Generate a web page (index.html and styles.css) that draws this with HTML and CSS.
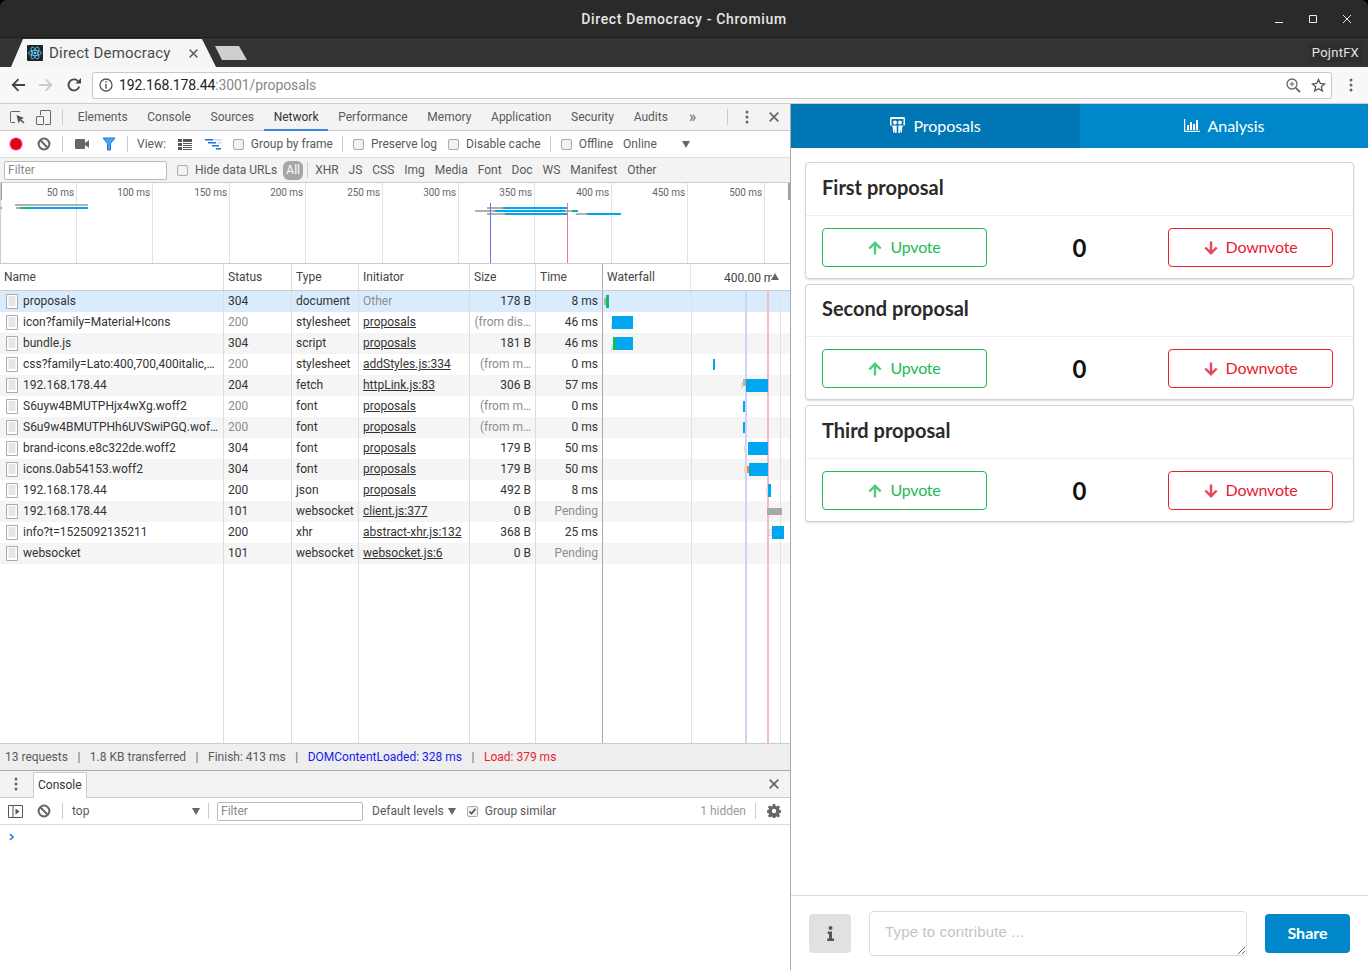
FILE: index.html
```html
<!DOCTYPE html>
<html lang="en">
<head>
<meta charset="utf-8">
<title>Direct Democracy - Chromium</title>
<link rel="stylesheet" href="styles.css">
</head>
<body>
<svg class="defs" width="0" height="0">
  <symbol id="doc" viewBox="0 0 12 15"><path d="M.5.5h11v14H.5z" fill="#fff" stroke="#aaa"/><path d="M2.500 3h7M2.500 5h7M2.500 7h7M2.500 9h7M2.500 11h7" stroke="#ccc"/></symbol>
  <symbol id="block" viewBox="0 0 14 14"><circle cx="7" cy="7" r="5.400" fill="none" stroke="#666" stroke-width="2"/><path d="M3.300 3.300l7.400 7.400" stroke="#666" stroke-width="2"/></symbol>
  <symbol id="close" viewBox="0 0 10 10"><path d="M.7.7l8.600 8.600M9.300.7L.7 9.300" stroke="#666" stroke-width="1.700"/></symbol>
  <symbol id="kebab" viewBox="0 0 4 14"><circle cx="2" cy="2" r="1.500" fill="#666"/><circle cx="2" cy="7" r="1.500" fill="#666"/><circle cx="2" cy="12" r="1.500" fill="#666"/></symbol>
  <symbol id="up" viewBox="0 0 14 14"><path d="M7 13.500V2M1.300 7.500L7 1.800l5.700 5.700" fill="none" stroke="currentColor" stroke-width="2.400"/></symbol>
  <symbol id="down" viewBox="0 0 14 14"><path d="M7 .5V12M1.300 6.500L7 12.200l5.700-5.700" fill="none" stroke="currentColor" stroke-width="2.400"/></symbol>
</svg>
<div class="window">
  <header class="titlebar">
    <span class="title">Direct Democracy - Chromium</span>
    <div class="winctl">
      <svg width="10" height="10" viewBox="0 0 10 10"><path d="M1 8.500h8" stroke="#eee" stroke-width="1"/></svg>
      <svg width="10" height="10" viewBox="0 0 10 10"><path d="M1.500 1.500h7v7h-7z" fill="none" stroke="#eee"/></svg>
      <svg width="10" height="10" viewBox="0 0 10 10"><path d="M1 1l8 8M9 1L1 9" stroke="#eee"/></svg>
    </div>
  </header>
  <div class="tabstrip">
    <div class="tab">
      <svg class="favicon" width="16" height="16" viewBox="0 0 16 16"><rect width="16" height="16" rx="1" fill="#20232a"/><g fill="none" stroke="#61dafb" stroke-width=".8"><ellipse cx="8" cy="8" rx="6.500" ry="2.600"/><ellipse cx="8" cy="8" rx="6.500" ry="2.600" transform="rotate(60 8 8)"/><ellipse cx="8" cy="8" rx="6.500" ry="2.600" transform="rotate(120 8 8)"/></g><circle cx="8" cy="8" r="1.300" fill="#61dafb"/></svg>
      <span class="tabtitle">Direct Democracy</span>
      <svg class="tabclose" width="9" height="9"><use href="#close"/></svg>
    </div>
    <div class="newtab"></div>
    <span class="profile">PojntFX</span>
  </div>
  <div class="navbar">
    <svg class="nav1" width="14" height="14" viewBox="0 0 14 14"><path d="M14 7H2M7.500 1.200L1.700 7l5.800 5.800" fill="none" stroke="#444" stroke-width="1.800"/></svg>
    <svg class="nav2" width="14" height="14" viewBox="0 0 14 14"><path d="M0 7h12M6.500 1.200L12.300 7l-5.800 5.800" fill="none" stroke="#ccc" stroke-width="1.800"/></svg>
    <svg class="nav3" width="14" height="14" viewBox="0 0 14 14"><path d="M12.300 8.500A5.500 5.500 0 1 1 11 3.100" fill="none" stroke="#444" stroke-width="1.800"/><path d="M8.500 5.500H14V0z" fill="#444"/></svg>
    <div class="omnibox">
      <svg width="14" height="14" viewBox="0 0 14 14"><circle cx="7" cy="7" r="6" fill="none" stroke="#555" stroke-width="1.300"/><path d="M6.300 3.300h1.400v1.400H6.300zM6.300 6h1.400v4.700H6.300z" fill="#555"/></svg>
      <span class="url"><b>192.168.178.44</b>:3001/proposals</span>
      <svg class="zoomic" width="15" height="15" viewBox="0 0 15 15"><circle cx="6" cy="6" r="5" fill="none" stroke="#666" stroke-width="1.300"/><path d="M9.800 9.800L14 14" stroke="#666" stroke-width="1.800"/><path d="M3.500 6h5M6 3.500v5" stroke="#666"/></svg>
      <svg class="star" width="15" height="15" viewBox="0 0 15 15"><path d="M7.500 1.500l1.800 4 4.300.4-3.300 2.900 1 4.200-3.800-2.200-3.800 2.200 1-4.200L1.400 5.900l4.300-.4z" fill="none" stroke="#555" stroke-width="1.300"/></svg>
    </div>
    <svg class="navkebab" width="4" height="14"><use href="#kebab"/></svg>
  </div>

  <main class="content">
    <section class="devtools">
      <nav class="dt-tabs">
        <svg class="ic-inspect" width="15" height="13" viewBox="0 0 15 13"><path d="M10 .5H1.500a1 1 0 0 0-1 1v9a1 1 0 0 0 1 1H5" fill="none" stroke="#666"/><path d="M6.500 4l2 8.500 1.500-3 3.500 3 1-1-3.300-3.200 2.800-1.300z" fill="#555"/></svg>
        <svg class="ic-device" width="15" height="15" viewBox="0 0 15 15"><path d="M4.500 5V1a.5.500 0 0 1 .5-.5h9a.5.500 0 0 1 .5.500v13a.5.500 0 0 1-.5.500H9" fill="none" stroke="#666"/><rect x=".5" y="6.500" width="7" height="8" rx=".5" fill="none" stroke="#666"/></svg>
        <i class="sep sep-tabs"></i>
        <a>Elements</a><a>Console</a><a>Sources</a><a class="active">Network</a><a>Performance</a><a>Memory</a><a>Application</a><a>Security</a><a>Audits</a>
        <span class="more">»</span>
        <i class="sep sep-end"></i>
        <svg class="dt-kebab" width="4" height="14"><use href="#kebab"/></svg>
        <svg class="dt-close" width="10" height="10"><use href="#close"/></svg>
      </nav>
      <div class="dt-toolbar">
        <span class="record"></span>
        <svg class="ic-block" width="14" height="14"><use href="#block"/></svg>
        <i class="sep sep-a"></i>
        <svg class="ic-cam" width="14" height="10" viewBox="0 0 14 10"><rect width="10" height="10" rx="1" fill="#666"/><path d="M10 4l4-3v8l-4-3z" fill="#666"/></svg>
        <svg class="ic-filter" width="14" height="14" viewBox="0 0 14 14"><path d="M1 1h12L8.500 6.500V13h-3V6.500z" fill="#4aa5ee" stroke="#1a73d9"/></svg>
        <i class="sep sep-b"></i>
        <span class="view">View:</span>
        <svg class="ic-list" width="14" height="11" viewBox="0 0 14 11"><path d="M0 0h4v3H0zM5 0h9v3H5zM0 4h4v3H0zM5 4h9v1H5zM5 6h9v1H5zM0 8h4v3H0zM5 8h9v1H5zM5 10h9v1H5z" fill="#555"/></svg>
        <svg class="ic-wf" width="17" height="11" viewBox="0 0 17 11"><path d="M0 0h8v1.500H0z" fill="#1a73d9"/><path d="M8 0h9v1.500H8zM12 3h5v1.500h-5z" fill="#cde"/><path d="M3 3h8v1.500H3zM7 6h7v1.500H7zM11 9h5v1.500h-5z" fill="#1a73d9"/></svg>
        <label class="cb cb-group"><i class="box"></i>Group by frame</label>
        <i class="sep sep-c"></i>
        <label class="cb cb-log"><i class="box"></i>Preserve log</label>
        <label class="cb cb-cache"><i class="box"></i>Disable cache</label>
        <i class="sep sep-d"></i>
        <label class="cb cb-off"><i class="box"></i>Offline</label>
        <span class="online">Online</span>
        <i class="tri tri-online"></i>
      </div>
      <div class="dt-filter">
        <div class="input filter-main">Filter</div>
        <label class="cb cb-hide"><i class="box"></i>Hide data URLs</label>
        <span class="pill">All</span>
        <i class="sep sep-f"></i>
        <span class="ftype">XHR</span><span class="ftype">JS</span><span class="ftype">CSS</span><span class="ftype">Img</span><span class="ftype">Media</span><span class="ftype">Font</span><span class="ftype">Doc</span><span class="ftype">WS</span><span class="ftype">Manifest</span><span class="ftype">Other</span>
      </div>
      <div class="overview">
        <div class="tick" style="left:76px"><span>50 ms</span></div>
        <div class="tick" style="left:152px"><span>100 ms</span></div>
        <div class="tick" style="left:229px"><span>150 ms</span></div>
        <div class="tick" style="left:305px"><span>200 ms</span></div>
        <div class="tick" style="left:382px"><span>250 ms</span></div>
        <div class="tick" style="left:458px"><span>300 ms</span></div>
        <div class="tick" style="left:534px"><span>350 ms</span></div>
        <div class="tick" style="left:611px"><span>400 ms</span></div>
        <div class="tick" style="left:687px"><span>450 ms</span></div>
        <div class="tick" style="left:764px"><span>500 ms</span></div>
        <i class="handle" style="left:0"></i><i class="handle" style="left:788px"></i>
        <i class="ob blue" style="left:0;top:24px;width:2px"></i>
        <i class="ob grey" style="left:15px;top:21px;width:73px"></i>
        <i class="ob grey" style="left:16px;top:24px;width:4px"></i>
        <i class="ob green" style="left:20px;top:24px;width:9px"></i>
        <i class="ob blue" style="left:29px;top:24px;width:59px"></i>
        <i class="ob grey" style="left:487px;top:24px;width:16px"></i>
        <i class="ob blue" style="left:503px;top:24px;width:64px"></i>
        <i class="ob grey" style="left:475px;top:27px;width:20px"></i>
        <i class="ob blue" style="left:495px;top:27px;width:70px"></i>
        <i class="ob grey" style="left:565px;top:27px;width:7px"></i>
        <i class="ob green" style="left:572px;top:27px;width:3px"></i>
        <i class="ob blue" style="left:575px;top:27px;width:3px"></i>
        <i class="ob grey" style="left:487px;top:30px;width:18px"></i>
        <i class="ob blue" style="left:505px;top:30px;width:62px"></i>
        <i class="ob grey" style="left:576px;top:30px;width:11px"></i>
        <i class="ob blue" style="left:587px;top:30px;width:34px"></i>
        <i class="omark dcl"></i><i class="omark load"></i>
      </div>
      <div class="nt-head nt-grid">
        <div>Name</div><div>Status</div><div>Type</div><div>Initiator</div><div>Size</div><div>Time</div>
        <div class="wf-head"><span>Waterfall</span><span class="wf-time">400.00 ms</span><i class="tri-up"></i></div>
      </div>
      <div class="nt-body">
        <div class="nt-row nt-grid sel"><div class="name"><svg class="doc"><use href="#doc"/></svg><span>proposals</span></div><div>304</div><div>document</div><div class="dim">Other</div><div class="r">178 B</div><div class="r">8 ms</div><div></div></div>
        <div class="nt-row nt-grid"><div class="name"><svg class="doc"><use href="#doc"/></svg><span>icon?family=Material+Icons</span></div><div class="dim">200</div><div>stylesheet</div><div class="lnk">proposals</div><div class="r dim">(from dis…</div><div class="r">46 ms</div><div></div></div>
        <div class="nt-row nt-grid"><div class="name"><svg class="doc"><use href="#doc"/></svg><span>bundle.js</span></div><div>304</div><div>script</div><div class="lnk">proposals</div><div class="r">181 B</div><div class="r">46 ms</div><div></div></div>
        <div class="nt-row nt-grid"><div class="name"><svg class="doc"><use href="#doc"/></svg><span>css?family=Lato:400,700,400italic,…</span></div><div class="dim">200</div><div>stylesheet</div><div class="lnk">addStyles.js:334</div><div class="r dim">(from m…</div><div class="r">0 ms</div><div></div></div>
        <div class="nt-row nt-grid"><div class="name"><svg class="doc"><use href="#doc"/></svg><span>192.168.178.44</span></div><div>204</div><div>fetch</div><div class="lnk">httpLink.js:83</div><div class="r">306 B</div><div class="r">57 ms</div><div></div></div>
        <div class="nt-row nt-grid"><div class="name"><svg class="doc"><use href="#doc"/></svg><span>S6uyw4BMUTPHjx4wXg.woff2</span></div><div class="dim">200</div><div>font</div><div class="lnk">proposals</div><div class="r dim">(from m…</div><div class="r">0 ms</div><div></div></div>
        <div class="nt-row nt-grid"><div class="name"><svg class="doc"><use href="#doc"/></svg><span>S6u9w4BMUTPHh6UVSwiPGQ.wof…</span></div><div class="dim">200</div><div>font</div><div class="lnk">proposals</div><div class="r dim">(from m…</div><div class="r">0 ms</div><div></div></div>
        <div class="nt-row nt-grid"><div class="name"><svg class="doc"><use href="#doc"/></svg><span>brand-icons.e8c322de.woff2</span></div><div>304</div><div>font</div><div class="lnk">proposals</div><div class="r">179 B</div><div class="r">50 ms</div><div></div></div>
        <div class="nt-row nt-grid"><div class="name"><svg class="doc"><use href="#doc"/></svg><span>icons.0ab54153.woff2</span></div><div>304</div><div>font</div><div class="lnk">proposals</div><div class="r">179 B</div><div class="r">50 ms</div><div></div></div>
        <div class="nt-row nt-grid"><div class="name"><svg class="doc"><use href="#doc"/></svg><span>192.168.178.44</span></div><div>200</div><div>json</div><div class="lnk">proposals</div><div class="r">492 B</div><div class="r">8 ms</div><div></div></div>
        <div class="nt-row nt-grid"><div class="name"><svg class="doc"><use href="#doc"/></svg><span>192.168.178.44</span></div><div>101</div><div>websocket</div><div class="lnk">client.js:377</div><div class="r">0 B</div><div class="r dim">Pending</div><div></div></div>
        <div class="nt-row nt-grid"><div class="name"><svg class="doc"><use href="#doc"/></svg><span>info?t=1525092135211</span></div><div>200</div><div>xhr</div><div class="lnk">abstract-xhr.js:132</div><div class="r">368 B</div><div class="r">25 ms</div><div></div></div>
        <div class="nt-row nt-grid"><div class="name"><svg class="doc"><use href="#doc"/></svg><span>websocket</span></div><div>101</div><div>websocket</div><div class="lnk">websocket.js:6</div><div class="r">0 B</div><div class="r dim">Pending</div><div></div></div>
        <div class="nt-fill nt-grid"><div></div><div></div><div></div><div></div><div></div><div></div><div></div></div>
        <div class="wf">
          <i class="wl" style="left:88px"></i>
          <i class="wl mark-b" style="left:142px"></i>
          <i class="wl mark-r" style="left:164px"></i>
          <i class="wl" style="left:177px"></i>
          <i class="b grey" style="left:1px;top:7px;width:2px"></i><i class="b green" style="left:3px;top:4px;width:3px"></i>
          <i class="b pale" style="left:8px;top:32px;width:1px"></i><i class="b blue" style="left:9px;top:25px;width:21px"></i>
          <i class="b pale" style="left:8px;top:53px;width:2px"></i><i class="b green" style="left:10px;top:46px;width:3px"></i><i class="b blue" style="left:13px;top:46px;width:17px"></i>
          <i class="b blue short" style="left:110px;top:68px;width:2px"></i>
          <i class="b pale" style="left:138px;top:91px;width:2px"></i><i class="b grey" style="left:140px;top:88px;width:3px"></i><i class="b blue" style="left:143px;top:88px;width:22px"></i>
          <i class="b blue short" style="left:140px;top:110px;width:2px"></i>
          <i class="b blue short" style="left:140px;top:131px;width:2px"></i>
          <i class="b pale" style="left:141px;top:154px;width:3px"></i><i class="b blue" style="left:145px;top:151px;width:20px"></i>
          <i class="b pale" style="left:141px;top:175px;width:3px"></i><i class="b orange" style="left:144px;top:175px;width:2px"></i><i class="b blue" style="left:146px;top:172px;width:19px"></i>
          <i class="b pale" style="left:163px;top:196px;width:2px"></i><i class="b blue" style="left:165px;top:193px;width:3px"></i>
          <i class="b socket" style="left:164px;top:217px;width:15px"></i>
          <i class="b outline" style="left:166px;top:238px;width:3px"></i><i class="b blue" style="left:169px;top:235px;width:12px"></i>
        </div>
      </div>
      <footer class="nt-status">
        <span>13 requests</span><i>|</i><span>1.8 KB transferred</span><i>|</i><span>Finish: 413 ms</span><i>|</i><span class="s-blue">DOMContentLoaded: 328 ms</span><i>|</i><span class="s-red">Load: 379 ms</span>
      </footer>
      <div class="drawer-head">
        <svg class="dr-kebab" width="4" height="14"><use href="#kebab"/></svg>
        <span class="dr-tab">Console</span>
        <svg class="dr-close" width="10" height="10"><use href="#close"/></svg>
      </div>
      <div class="con-bar">
        <svg class="ic-side" width="15" height="13" viewBox="0 0 15 13"><path d="M.5.5h14v12H.5zM5 .5v12" fill="none" stroke="#555"/><path d="M7.500 3.500l4 3-4 3z" fill="#555"/></svg>
        <svg class="ic-block2" width="14" height="14"><use href="#block"/></svg>
        <i class="sep sep-g"></i>
        <span class="ctx">top</span>
        <i class="tri tri-ctx"></i>
        <i class="sep sep-h"></i>
        <div class="input filter-con">Filter</div>
        <span class="levels">Default levels</span>
        <i class="tri tri-lvl"></i>
        <label class="cb cb-sim"><i class="box checked"><svg width="9" height="9" viewBox="0 0 9 9"><path d="M1.500 4.500l2 2.200 4-5" fill="none" stroke="#444" stroke-width="1.500"/></svg></i>Group similar</label>
        <span class="hidden-n">1 hidden</span>
        <i class="sep sep-i"></i>
        <svg class="ic-gear" width="14" height="14" viewBox="0 0 14 14"><path fill="#666" fill-rule="evenodd" d="M5.800 0h2.400l.3 1.900 1.300.6 1.600-1.100 1.700 1.700-1.100 1.600.5 1.300 2 .3v2.400l-2 .3-.5 1.300 1.100 1.600-1.700 1.700-1.600-1.100-1.300.5-.3 2H5.800l-.3-2-1.300-.5-1.600 1.100L.9 12l1.100-1.600-.5-1.300-1.900-.3V6.400l1.900-.3.500-1.300L.9 3.100l1.700-1.700 1.600 1.100 1.300-.6zM7 4.800a2.200 2.200 0 1 0 0 4.400 2.200 2.200 0 0 0 0-4.400z"/></svg>
      </div>
      <div class="con-body"><svg width="6" height="8" viewBox="0 0 6 8"><path d="M1 1l3 3-3 3" fill="none" stroke="#2a7de1" stroke-width="1.600"/></svg></div>
    </section>

    <section class="app">
      <nav class="app-tabs">
        <a class="on">
          <svg width="15" height="16" viewBox="0 0 15 16"><path d="M1.500 0h12A1.500 1.500 0 0 1 15 1.500V8l-1.500 1V2H1.500v7L0 8V1.500A1.500 1.500 0 0 1 1.500 0z" fill="#fff"/><circle cx="5" cy="5.500" r="2" fill="#fff"/><circle cx="10" cy="5.500" r="2" fill="#fff"/><path d="M2 8.500h4.700V15a1 1 0 0 1-2 .5L4.300 12 4 15.500H3C3 13 3 11 2 8.500zM13 8.500H8.300V15a1 1 0 0 0 2 .5l.4-3.500.3 3.500h1c0-2.500 0-4.500 1-7z" fill="#fff"/></svg>
          Proposals
        </a>
        <a>
          <svg width="16" height="13" viewBox="0 0 16 13"><path d="M0 0h1.200v11.800H16V13H0zM3 6h2v5H3zM6 3h2v8H6zM9 5h2v6H9zM12 1h2v10h-2z" fill="#fff"/></svg>
          Analysis
        </a>
      </nav>
      <div class="cards">
        <article class="card">
          <h2>First proposal</h2>
          <div class="votes">
            <button class="vote up"><svg width="14" height="14"><use href="#up"/></svg>Upvote</button>
            <span class="count">0</span>
            <button class="vote down"><svg width="14" height="14"><use href="#down"/></svg>Downvote</button>
          </div>
        </article>
        <article class="card">
          <h2>Second proposal</h2>
          <div class="votes">
            <button class="vote up"><svg width="14" height="14"><use href="#up"/></svg>Upvote</button>
            <span class="count">0</span>
            <button class="vote down"><svg width="14" height="14"><use href="#down"/></svg>Downvote</button>
          </div>
        </article>
        <article class="card">
          <h2>Third proposal</h2>
          <div class="votes">
            <button class="vote up"><svg width="14" height="14"><use href="#up"/></svg>Upvote</button>
            <span class="count">0</span>
            <button class="vote down"><svg width="14" height="14"><use href="#down"/></svg>Downvote</button>
          </div>
        </article>
      </div>
      <footer class="composer">
        <button class="info"><svg width="7" height="15" viewBox="0 0 7 15"><circle cx="3.500" cy="2" r="2" fill="#555"/><path d="M.7 5.500h4.300v7H7V15H.2v-2.500h1.800V8H.7z" fill="#555"/></svg></button>
        <textarea class="contrib" placeholder="Type to contribute ..."></textarea>
        <button class="share">Share</button>
      </footer>
    </section>
  </main>
</div>
</body>
</html>
```

FILE: styles.css
```css
* { box-sizing: border-box; }
html, body { margin: 0; height: 970px; overflow: hidden; background: #000; }
.defs { position: absolute; }
i { font-style: normal; display: block; flex: none; }
svg { display: block; flex: none; }
.window { width: 1368px; height: 970px; display: flex; flex-direction: column; font-family: Roboto, sans-serif; font-size: 12px; color: #333; }

/* title bar */
.titlebar { height: 38px; background: #2b2a2a; border-radius: 7px 7px 0 0; border-bottom: 1px solid #1c1c1c; display: flex; align-items: center; justify-content: center; position: relative; }
.title { color: #e6e6e6; font: 500 14px Roboto, sans-serif; letter-spacing: .65px; }
.winctl { position: absolute; right: 16px; top: 14px; display: flex; gap: 24px; }

.tabstrip { height: 29px; background: #343333; display: flex; align-items: flex-end; position: relative; }
.tab { width: 205px; height: 28px; margin-left: 11px; background: #f5f5f5; clip-path: polygon(0 100%, 12px 0, 191px 0, 205px 100%); display: flex; align-items: center; padding: 0 0 0 16px; }
.tabtitle { margin-left: 6px; font-size: 15px; letter-spacing: .22px; color: #4a4a4a; width: 130px; }
.tabclose { margin-left: 10px; }
.newtab { width: 32px; height: 14px; margin: 0 0 7px -1px; background: #cfcfcf; clip-path: polygon(0 0, 24px 0, 32px 100%, 7px 100%); }
.profile { margin-left: auto; margin-right: 6px; align-self: center; padding: 2px 3px; border-radius: 4px; background: #2f2e2e; color: #e4e4e4; font-size: 13px; letter-spacing: .25px; }

.navbar { height: 36px; background: #f8f8f8; display: flex; align-items: center; }
.nav1 { margin-left: 11px; }
.nav2 { margin-left: 14px; }
.nav3 { margin-left: 14px; }
.omnibox { width: 1240px; height: 27px; margin-left: 11px; background: #fff; border: 1px solid #c8c8c8; border-radius: 3px; display: flex; align-items: center; padding-left: 6px; }
.url { margin-left: 6px; font-size: 14px; letter-spacing: -.1px; color: #888; }
.url b { font-weight: 400; color: #222; }
.zoomic { margin-left: auto; }
.star { margin: 0 5px 0 10px; }
.navkebab { margin-left: 17px; }

.content { flex: 1; min-height: 0; display: flex; border-top: 1px solid #ccc; background: #fff; }

/* devtools */
.devtools { width: 791px; flex: none; border-right: 1px solid #aaa; display: flex; flex-direction: column; color: #5a5a5a; }
.sep { width: 1px; height: 16px; background: #ccc; }

.dt-tabs { height: 27px; background: #f3f3f3; border-bottom: 1px solid #ccc; display: flex; align-items: center; flex: none; }
.ic-inspect { margin-left: 10px; }
.ic-device { margin-left: 11px; }
.sep-tabs { margin-left: 11px; margin-right: 5px; }
.dt-tabs a { height: 26px; line-height: 26px; padding: 0 9.850px; white-space: nowrap; }
.dt-tabs a.active { color: #333; border-bottom: 2px solid #3d85e0; height: 27px; margin-bottom: -1px; }
.more { margin-left: 11px; font-size: 16px; line-height: 20px; color: #666; }
.sep-end { margin-left: auto; }
.dt-kebab { margin-left: 17px; }
.dt-close { margin-left: 20px; margin-right: 11px; }

.dt-toolbar { height: 27px; background: #fff; border-bottom: 1px solid #ddd; display: flex; align-items: center; flex: none; }
.record { width: 12px; height: 12px; margin-left: 10px; border-radius: 50%; background: #e6001a; box-shadow: 0 0 0 1px rgba(230,0,26,.25); }
.ic-block { margin-left: 15px; }
.sep-a { margin-left: 11px; }
.ic-cam { margin-left: 12px; }
.ic-filter { margin-left: 13px; }
.sep-b { margin-left: 11px; }
.view { margin-left: 9px; }
.ic-list { margin-left: 12px; }
.ic-wf { margin-left: 13px; }
.cb { display: flex; align-items: center; white-space: nowrap; }
.box { width: 11px; height: 11px; border: 1px solid #aaa; border-radius: 2px; background: #f2f2f2; margin-right: 7px; display: flex; align-items: center; justify-content: center; }
.cb-group { margin-left: 11px; }
.sep-c { margin-left: 9px; }
.cb-log { margin-left: 10px; }
.cb-cache { margin-left: 11px; }
.sep-d { margin-left: 9px; }
.cb-off { margin-left: 10px; }
.online { margin-left: 10px; }
.tri { width: 0; height: 0; border-left: 4.500px solid transparent; border-right: 4.500px solid transparent; border-top: 7px solid #666; }
.tri-online { margin-left: 25px; }

.dt-filter { height: 25px; background: #f3f3f3; border-bottom: 1px solid #ccc; display: flex; align-items: center; flex: none; }
.input { background: #fff; border: 1px solid #bbb; border-radius: 2px; color: #8a8a8a; padding-left: 3px; line-height: 17px; height: 19px; }
.filter-main { width: 163px; margin-left: 4px; }
.cb-hide { margin-left: 10px; }
.pill { width: 20px; height: 19px; margin-left: 6px; border-radius: 6px; background: #a6a6a6; color: #fff; text-align: center; line-height: 19px; }
.sep-f { margin-left: 4px; margin-right: 2px; }
.ftype { padding: 0 5px; white-space: nowrap; letter-spacing: -.02px; }

.overview { height: 81px; flex: none; position: relative; border-left: 1px solid #ccc; background: #fff; border-bottom: 1px solid #ccc; overflow: hidden; }
.tick { position: absolute; top: 0; bottom: 0; width: 1px; background: #e3e3e3; margin-left: -1px; }
.tick span { position: absolute; right: 3px; top: 4px; font-size: 10px; letter-spacing: -.1px; color: #666; white-space: nowrap; }
.handle { position: absolute; top: 0; width: 2px; height: 17px; margin-left: -1px; background: #a0a0a0; }
.ob { position: absolute; height: 2px; margin-left: -1px; }
.omark { position: absolute; top: 20px; bottom: 0; width: 1px; margin-left: -1px; }
.omark.dcl { left: 490px; background: #6e6ef0; }
.omark.load { left: 567px; background: #ee7b80; }
.grey { background: #b0b0b0; }
.blue { background: #00a6f0; }
.green { background: #0bbf6a; }
.orange { background: #ee8a2a; }
.pale { background: #ddd; }

.nt-grid { display: grid; grid-template-columns: 224px 68px 67px 111px 66px 67px 187px; }
.nt-grid > div { padding: 0 4px; border-right: 1px solid #ddd; overflow: hidden; white-space: nowrap; }
.nt-grid > div:nth-child(6) { border-right-color: #aaa; }
.nt-grid > div:nth-child(7) { border-right: 0; padding: 0; }
.nt-head { height: 27px; background: #fff; border-bottom: 1px solid #ccc; line-height: 26px; flex: none; }
.nt-head > div { color: #444; }
.nt-grid > .wf-head:nth-child(7) { display: flex; position: relative; padding-left: 4px; }
.wf-head span:first-child { width: 84px; border-right: 1px solid #e5e5e5; }
.wf-time { position: absolute; left: 121px; width: 48px; top: 1px; line-height: 27px; overflow: hidden; }
.tri-up { position: absolute; left: 168px; top: 9px; width: 0; height: 0; border-left: 4.500px solid transparent; border-right: 4.500px solid transparent; border-bottom: 7px solid #666; }
.nt-body { height: 452px; flex: none; position: relative; display: flex; flex-direction: column; }
.nt-row { height: 21px; line-height: 20px; color: #333; flex: none; }
.nt-row:nth-child(odd) { background: #f5f5f5; }
.nt-row.sel { background: #d9ecfd; }
.nt-fill { flex: 1; }
.nt-grid > .name { display: flex; align-items: flex-start; padding-left: 6px; }
.doc { width: 12px; height: 15px; margin: 3px 5px 0 0; }
.nt-grid > .dim { color: #8c8c8c; }
.nt-grid > .r { text-align: right; }
.nt-grid > .lnk { text-decoration: underline; color: #333; }

.wf { position: absolute; left: 603px; top: 0; bottom: 0; width: 187px; }
.wl { position: absolute; top: 0; bottom: 0; width: 1px; background: #e2e2e2; }
.wl.mark-b { width: 2px; background: #cfd3f8; }
.wl.mark-r { width: 2px; background: #f9b9bd; }
.b { position: absolute; height: 13px; }
.b.short { height: 11px; }
.b.grey, .b.pale, .b.orange { height: 7px; }
.b.socket { height: 7px; background: #a8a8a8; }
.b.outline { height: 7px; border: 1px solid #ddd; background: #fff; }

.nt-status { height: 28px; background: #eee; border-top: 1px solid #ccc; border-bottom: 1px solid #aaa; display: flex; align-items: center; padding: 0 0 1px 5px; gap: 9.500px; white-space: nowrap; flex: none; }
.nt-status i { color: #666; }
.s-blue { color: #1a1aee; }
.s-red { color: #ee1c2e; }

.drawer-head { height: 27px; background: #f3f3f3; border-bottom: 1px solid #ccc; display: flex; align-items: center; flex: none; }
.dr-kebab { margin-left: 14px; }
.dr-tab { margin-left: 15px; height: 26px; margin-top: 1px; padding: 0 4px; line-height: 25px; background: #fff; border: 1px solid #ccc; border-bottom: 0; color: #333; }
.dr-close { margin-left: auto; margin-right: 11px; }

.con-bar { height: 27px; border-bottom: 1px solid #ddd; background: #fff; display: flex; align-items: center; flex: none; }
.ic-side { margin-left: 8px; }
.ic-block2 { margin-left: 14px; }
.sep-g { margin-left: 11px; }
.ctx { margin-left: 9px; width: 120px; }
.tri-ctx { margin-left: 0; }
.sep-h { margin-left: 8px; }
.filter-con { width: 146px; margin-left: 8px; }
.levels { margin-left: 9px; }
.tri-lvl { margin-left: 4px; }
.cb-sim { margin-left: 11px; }
.hidden-n { margin-left: auto; color: #999; }
.sep-i { margin-left: 9px; }
.ic-gear { margin-left: 11px; margin-right: 9px; }
.con-body { flex: 1; padding: 8px 0 0 9px; background: #fff; }

/* app */
.app { flex: 1; min-width: 0; display: flex; flex-direction: column; font-family: Lato, sans-serif; background: #fff; }
.app-tabs { height: 44px; display: grid; grid-template-columns: 289px 1fr; background: #0087cb; flex: none; }
.app-tabs a { display: flex; align-items: center; justify-content: center; gap: 8px; color: #fff; font-size: 16px; letter-spacing: -.05px; padding-bottom: 2px; }
.app-tabs a.on { background: #0076b4; }
.cards { flex: 1; padding: 14px 14px 0; display: flex; flex-direction: column; gap: 5px; }
.card { height: 117px; border: 1px solid #d4d4d5; border-radius: 4px; box-shadow: 0 1px 2px rgba(34,36,38,.15); background: #fff; }
.card:nth-child(2) { height: 116px; }
.card h2 { margin: 0; height: 53px; border-bottom: 1px solid #eee; padding: 0 16px; font: 700 20px/48px Lato, sans-serif; color: #2a2a2a; }
.card:nth-child(2) h2 { height: 52px; line-height: 47px; }
.votes { display: flex; align-items: center; justify-content: space-between; padding: 12px 20px 0 16px; }
.vote { width: 165px; height: 39px; background: #fff; border: 1px solid; border-radius: 4px; display: flex; align-items: center; justify-content: center; gap: 8px; font: 400 16px Lato, sans-serif; letter-spacing: -.2px; padding: 0 0 2px; }
.vote svg { margin-top: 2px; }
.vote.up { color: #21ba55; border-color: #21ba55; }
.vote.up svg { color: #4fcb80; }
.vote.down { color: #e8212f; border-color: #e8212f; }
.vote.down svg { color: #e8475a; }
.count { font: 700 24px Lato, sans-serif; color: #111; width: 20px; margin-left: 4px; text-align: center; }
.composer { height: 75px; border-top: 1px solid #ddd; flex: none; display: flex; align-items: flex-start; padding: 15px 18px 0; }
.info { width: 42px; height: 39px; margin-top: 3px; border: 0; border-radius: 4px; background: #e0e1e2; display: flex; align-items: center; justify-content: center; padding: 0; }
.contrib { width: 378px; height: 45px; margin-left: 18px; border: 1px solid #ddd; border-radius: 4px; padding: 11px 15px; font: 15px "Liberation Sans", sans-serif; letter-spacing: .15px; resize: both; outline: 0; }
.contrib::placeholder { color: #c4c4c4; opacity: 1; }
.share { width: 85px; height: 39px; margin: 3px 0 0 18px; border: 0; border-radius: 4px; background: #0087cb; color: #fff; font: 700 16px Lato, sans-serif; padding: 0 0 2px; }
```
